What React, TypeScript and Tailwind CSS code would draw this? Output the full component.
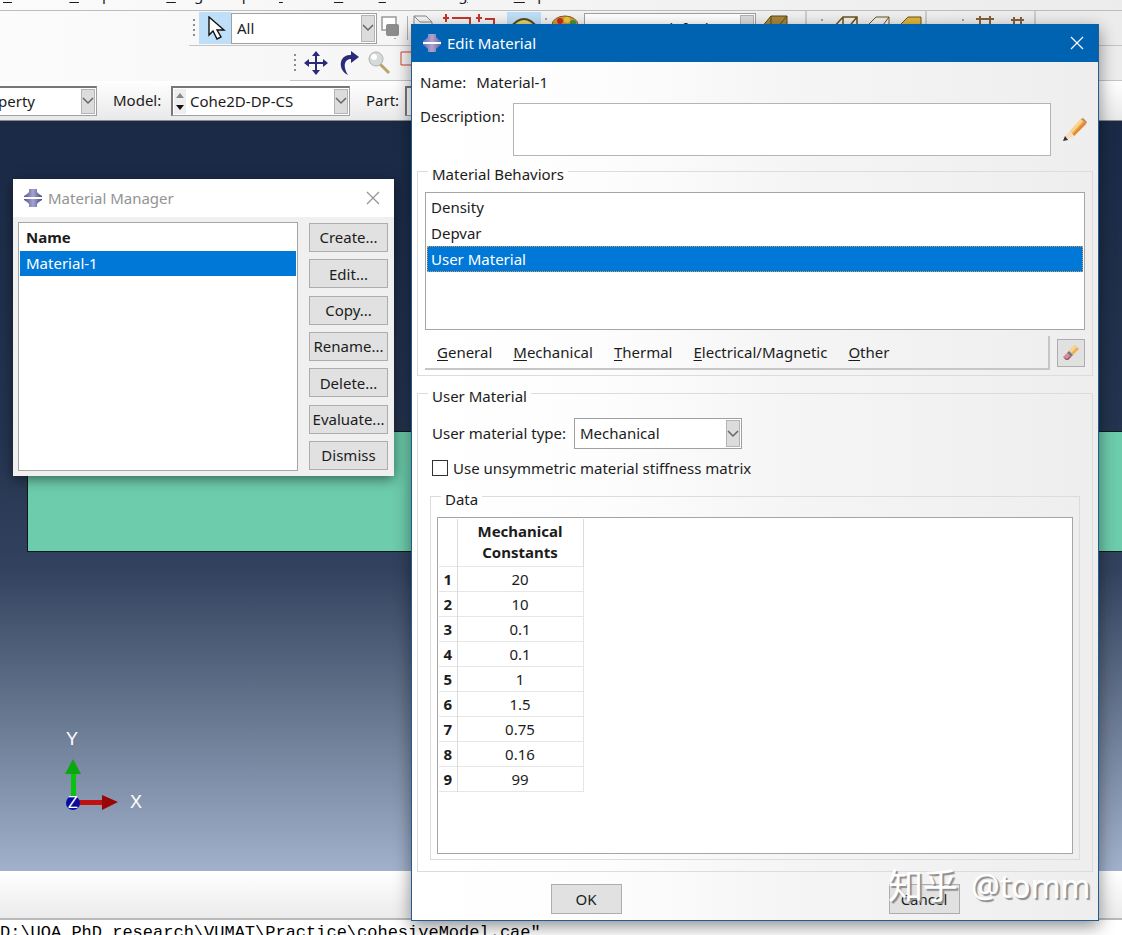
import React from "react";

interface MenuItem {
  before: string
  key: string
  after: string
}

interface ComboProps {
  id: string
  label: string
  value: string
  className?: string
  children?: React.ReactNode
}

const mainMenu: Array<MenuItem> = [
  { before: '', key: 'P', after: 'rofile' },
  { before: '', key: 'C', after: 'omposite' },
  { before: '', key: 'A', after: 'ssign' },
  { before: 'Specia', key: 'l', after: '' },
  { before: 'Feat', key: 'u', after: 're' },
  { before: '', key: 'T', after: 'ools' },
  { before: 'Plu', key: 'g', after: '-ins' },
  { before: '', key: 'H', after: 'elp' },
]

const behaviorMenu: Array<MenuItem> = [
  { before: '', key: 'G', after: 'eneral' },
  { before: '', key: 'M', after: 'echanical' },
  { before: '', key: 'T', after: 'hermal' },
  { before: '', key: 'E', after: 'lectrical/Magnetic' },
  { before: '', key: 'O', after: 'ther' },
]

const behaviors = ['Density', 'Depvar', 'User Material']
const constants = ['20', '10', '0.1', '0.1', '1', '1.5', '0.75', '0.16', '99']
const managerActions = ['Create...', 'Edit...', 'Copy...', 'Rename...', 'Delete...', 'Evaluate...', 'Dismiss']

const MenuLabel = ({ item }: { item: MenuItem }) => (
  <>{item.before}<span className="underline underline-offset-2">{item.key}</span>{item.after}</>
)

const Grip = () => (
  <svg width="4" height="20" viewBox="0 0 4 20" fill="#8d8d8d" aria-hidden="true">
    <rect x="1" y="1" width="2" height="2" />
    <rect x="1" y="6" width="2" height="2" />
    <rect x="1" y="11" width="2" height="2" />
    <rect x="1" y="16" width="2" height="2" />
  </svg>
)

const AppIcon = ({ active }: { active?: boolean }) => (
  <svg width="18" height="18" viewBox="0 0 18 18" aria-hidden="true">
    <defs>
      <linearGradient id={active ? 'ball-on' : 'ball-off'} x1="0" x2="1" y1="0" y2="0">
        <stop offset="0" stopColor={active ? '#5d6fc0' : '#55558c'} />
        <stop offset="0.5" stopColor={active ? '#b3a3c9' : '#a3a3d4'} />
        <stop offset="1" stopColor={active ? '#5d62b0' : '#4b4b80'} />
      </linearGradient>
    </defs>
    <path
      d="M5 0h8v3l2 2 3 2v4l-3 2-2 2v3H5v-3l-2-2-3-2V7l3-2 2-2z"
      fill={active ? 'url(#ball-on)' : 'url(#ball-off)'}
    />
    <rect x="0" y="8" width="18" height="2" fill="#fff" />
  </svg>
)

const CloseIcon = () => (
  <svg width="14" height="14" viewBox="0 0 14 14" stroke="currentColor" strokeWidth="1.2" aria-hidden="true">
    <path d="M1 1l12 12M13 1L1 13" />
  </svg>
)

const PencilIcon = () => (
  <svg width="26" height="26" viewBox="0 0 26 26" aria-hidden="true">
    <path d="M8 14L19 2l5 5-12 12z" fill="#f2ab4b" />
    <path d="M8 14L19 2l2 2L10 16z" fill="#fbd48c" />
    <path d="M11 17L22 5l2 2-12 12z" fill="#e08a35" />
    <path d="M19 2l2-1 4 4-1 2z" fill="#c9865a" />
    <path d="M8 14l4 5-7 4-3-3z" fill="#f7dcc0" />
    <path d="M3 19l3 4-5 1z" fill="#33302e" />
  </svg>
)

const EraserIcon = () => (
  <svg width="16" height="16" viewBox="0 0 16 16" aria-hidden="true">
    <path d="M12 0l4 4-6 6-4-4z" fill="#f0b255" />
    <path d="M12 0l2 2-6 6-2-2z" fill="#f8d48c" />
    <path d="M6 6l4 4-2 2-4-4z" fill="#75797c" />
    <path d="M4 8l4 4-3 3H3l-3-3z" fill="#d68aa0" />
    <path d="M0 12l3 3h2l3-3-1-1-3 3z" fill="#9c5468" />
  </svg>
)

const PointerIcon = () => (
  <svg width="18" height="24" viewBox="0 0 18 24" aria-hidden="true">
    <path d="M1 1v18l4-4 4 8 4-2-4-7h7z" fill="#fff" stroke="#111" strokeWidth="1.4" />
  </svg>
)

const OverlapIcon = () => (
  <svg width="19" height="24" viewBox="0 0 19 24" aria-hidden="true">
    <path d="M1 1h14v13H1z" fill="#fff" stroke="#999" strokeWidth="1.5" />
    <rect x="5" y="8" width="13" height="12" rx="2" fill="#8c8c8c" />
    <rect x="13" y="22" width="2" height="1" fill="#aaa" />
  </svg>
)

const MoveIcon = () => (
  <svg width="24" height="24" viewBox="0 0 24 24" fill="#2b2a78" aria-hidden="true">
    <path d="M11 4h2v16h-2zM4 11h16v2H4z" />
    <path d="M12 0l4 5H8zM12 24l4-5H8zM0 12l5-4v8zM24 12l-5-4v8z" />
  </svg>
)

const RotateIcon = () => (
  <svg width="20" height="24" viewBox="0 0 20 24" aria-hidden="true">
    <path d="M8 24C-3 19-1 3 11 4V0l8 6-8 6V8C5 8 2 15 8 24z" fill="#2b2a78" />
  </svg>
)

const MagnifierIcon = () => (
  <svg width="24" height="24" viewBox="0 0 24 24" aria-hidden="true">
    <path d="M12 13l9 9" stroke="#b9a468" strokeWidth="3" />
    <circle cx="8" cy="8" r="7" fill="#d6dbd9" stroke="#aeb2b1" />
    <circle cx="6" cy="6" r="3" fill="#fff" />
  </svg>
)

// the upper edges of the view tools that stick out above the dialog
const ViewTools = () => (
  <svg width="183" height="34" viewBox="0 0 183 34" fill="none" aria-hidden="true">
    <path d="M6 22V5h12l6 6v11M6 5l6 6h12" stroke="#888" />
    <path d="M38 3v8M35 7h6M44 7h18v14M71 3v8M68 7h6M77 8h9v12" stroke="#c8352a" strokeWidth="2" />
    <rect x="99" y="1" width="34" height="33" fill="#bfdff8" />
    <path d="M103 16q13-16 26 0" fill="#e8d474" stroke="#554a16" strokeWidth="2" />
    <circle cx="138" cy="8" r="1" fill="#888" />
    <ellipse cx="157" cy="14" rx="13" ry="9" fill="#d79a3c" stroke="#8a5a1c" />
    <circle cx="152" cy="10" r="3" fill="#cf2a1e" />
    <circle cx="159" cy="9" r="3" fill="#e9cf3a" />
    <circle cx="165" cy="12" r="3" fill="#3d9440" />
  </svg>
)

const RenderTools = () => (
  <svg width="280" height="34" viewBox="0 0 280 34" fill="none" aria-hidden="true">
    <path d="M5 17L15 5h16v12z" fill="#a8883c" stroke="#5c4813" />
    <path d="M15 5v12M31 5L21 17" stroke="#5c4813" />
    <path d="M50 0v34M170 0v34M279 0v34" stroke="#aaa" />
    <circle cx="66" cy="9" r="1" fill="#888" />
    <path d="M77 17L87 6h14v16M87 6v14M101 6L91 18" stroke="#6b5416" strokeWidth="1.5" />
    <path d="M109 17l11-11h13v16M133 6l-9 12" stroke="#6b5416" />
    <path d="M141 17l11-11h13v12z" fill="#e3b63c" stroke="#6b5416" />
    <circle cx="207" cy="9" r="1" fill="#888" />
    <path d="M220 8h18M224 5v14M234 5v14M255 9h13M258 6v14M265 6v14" stroke="#86603a" strokeWidth="2" />
  </svg>
)

const Chevron = () => (
  <svg width="12" height="8" viewBox="0 0 12 8" fill="none" stroke="#666" strokeWidth="1.5" aria-hidden="true">
    <path d="M1 1l5 5 5-5" />
  </svg>
)

const Combo = ({ id, label, value, className, children }: ComboProps) => (
  <div className={`flex items-stretch border border-[#a0a0a0] bg-white p-px ${className}`}>
    {children}
    <select id={id} aria-label={label} className="min-w-0 flex-1 appearance-none bg-white pl-1 outline-none">
      <option>{value}</option>
    </select>
    <span className="pointer-events-none flex w-[14px] items-center justify-center border border-[#b4b4b4] bg-[#dcdcdc]">
      <Chevron />
    </span>
  </div>
)

const Toolbars = () => (
  <header className="flex flex-col bg-linear-to-r from-[#fbfbfb] to-[#ececec]">
    <nav className="flex h-[10px] items-end gap-[21px] overflow-hidden whitespace-nowrap pb-[6px] pl-[3px]">
      {mainMenu.map((item) => (
        <a key={item.key} href="#" className="leading-5"><MenuLabel item={item} /></a>
      ))}
    </nav>
    <div className="flex h-[36px] border-t border-[#bdbdbd] pl-[189px]">
      <div className="flex flex-1 items-center whitespace-nowrap border-b border-[#c4c4c4]">
        <div className="flex w-[10px] justify-center"><Grip /></div>
        <button type="button" aria-label="Select" className="flex h-[32px] w-[32px] items-center justify-center bg-[#bfdff8] pl-1">
          <PointerIcon />
        </button>
        <Combo id="filter" label="Selection filter" value="All" className="h-[31px] w-[146px]" />
        <button type="button" aria-label="Overlap" className="flex w-[31px] justify-center border-r border-[#b0b0b0] pr-1"><OverlapIcon /></button>
        <ViewTools />
        <Combo id="color" label="Color code" value="Geometry defaults" className="ml-[-7px] h-[31px] w-[172px]" />
        <RenderTools />
      </div>
    </div>
    <div className="flex h-[35px] pl-[290px]">
      <div className="flex flex-1 items-center border-b border-[#c4c4c4]">
        <div className="flex w-[9px] justify-center"><Grip /></div>
        <div className="flex items-center gap-2 pl-[5px]">
          <button type="button" aria-label="Pan"><MoveIcon /></button>
          <button type="button" aria-label="Rotate" className="pl-1"><RotateIcon /></button>
          <button type="button" aria-label="Magnify"><MagnifierIcon /></button>
          <svg width="20" height="24" viewBox="0 0 20 24" fill="none" stroke="#d0402e" aria-hidden="true">
            <path d="M1 1h17v13H1z" />
          </svg>
        </div>
      </div>
    </div>
    <div className="flex h-[40px] items-center border-b border-[#8b8b8b] bg-linear-to-b from-white to-[#e9e9e9]">
      <Combo id="module" label="Module" value="Property" className="-ml-[32px] h-[30px] w-[129px] shrink-0 border-t-2 border-t-[#777]" />
      <label htmlFor="model" className="w-[74px] pl-4">Model:</label>
      <Combo id="model" label="Model" value="Cohe2D-DP-CS" className="h-[30px] w-[179px] shrink-0 border-t-2 border-l-2 border-t-[#777] border-l-[#777]">
        <span className="flex w-[12px] flex-col items-center justify-between bg-[#eee] py-1">
          <svg width="8" height="5" viewBox="0 0 8 5" aria-hidden="true"><path d="M4 0l4 5H0z" fill="#888" /></svg>
          <svg width="8" height="5" viewBox="0 0 8 5" aria-hidden="true"><path d="M0 0h8L4 5z" fill="#111" /></svg>
        </span>
      </Combo>
      <label htmlFor="part" className="w-[55px] pl-4">Part:</label>
      <Combo id="part" label="Part" value="" className="h-[30px] w-[180px] border-t-2 border-l-2 border-t-[#777] border-l-[#777]" />
    </div>
  </header>
)

const Viewport = () => (
  <main className="relative flex-1 bg-[linear-gradient(to_bottom,#1a2a46_0%,#24344f_42%,#33425e_60%,#62718a_77%,#a2b1cb_100%)]">
    <div className="absolute top-[310px] right-0 left-[27px] h-[121px] border border-r-0 border-[#0b1a1c] bg-[#6cccab]" />
    <svg className="absolute bottom-[55px] left-[60px]" width="90" height="90" viewBox="0 0 90 90" aria-hidden="true">
      <rect x="11" y="40" width="5" height="36" fill="#06c40c" />
      <path d="M13 33l8 15H5z" fill="#08a80e" />
      <rect x="16" y="74" width="27" height="5" fill="#c01010" />
      <path d="M42 69l16 7-16 8z" fill="#980606" />
      <circle cx="13" cy="77" r="7" fill="#0a0aa0" />
      <g fill="#fff" fontFamily="Liberation Sans" fontSize="18">
        <text x="6" y="19">Y</text>
        <text x="70" y="82">X</text>
        <text x="8" y="82" fontSize="16">Z</text>
      </g>
    </svg>
  </main>
)

const MaterialManager = () => (
  <section className="absolute top-[179px] left-[13px] w-[381px] bg-[#f0f0f0] shadow-[0_3px_12px_rgba(0,0,0,0.5)]">
    <div className="flex h-[38px] items-center bg-white pr-3.5 pl-[11px] text-[#939393]">
      <AppIcon />
      <h2 className="flex-1 pl-[6px]">Material Manager</h2>
      <button type="button" aria-label="Close"><CloseIcon /></button>
    </div>
    <div className="flex gap-[11px] py-[5px] pr-[6px] pl-[5px]">
      <div className="h-[249px] flex-1 border border-[#a5a5a5] bg-white p-px">
        <div className="flex h-[27px] items-center pl-[6px] font-bold">Name</div>
        <div className="flex h-[25px] items-center bg-[#0078d7] pl-[6px] text-white">Material-1</div>
      </div>
      <div className="flex w-[79px] flex-col justify-between py-px">
        {managerActions.map((action) => (
          <button key={action} type="button" className="h-[29px] whitespace-nowrap border border-[#adadad] bg-[#e1e1e1]">{action}</button>
        ))}
      </div>
    </div>
  </section>
)

const BehaviorFields = () => {
  const [selected, setSelected] = React.useState('User Material')

  return (
    <fieldset className="min-w-0 border border-[#dcdcdc] px-[7px] pt-2 pb-[5px]">
      <legend className="ml-[3px] px-1 pt-[6px] leading-5">Material Behaviors</legend>
      <ul className="h-[138px] border border-[#a5a5a5] bg-white p-px">
        {behaviors.map((name) => (
          <li key={name}>
            <button
              type="button"
              onClick={() => setSelected(name)}
              className={`h-[26px] w-full border pl-[3px] text-left ${selected === name ? 'border-dotted border-[#d09a5c] bg-[#0078d7] text-white' : 'border-transparent'}`}
            >
              {name}
            </button>
          </li>
        ))}
      </ul>
      <div className="mt-[6px] flex items-center gap-[7px]">
        <div className="flex h-[34px] flex-1 items-center gap-[21px] whitespace-nowrap border-r-2 border-b-2 border-[#c6c6c6] pl-3">
          {behaviorMenu.map((item) => (
            <button key={item.key} type="button"><MenuLabel item={item} /></button>
          ))}
        </div>
        <button type="button" aria-label="Delete behavior" className="flex h-[28px] w-[28px] items-center justify-center border border-[#adadad] bg-[#e1e1e1]">
          <EraserIcon />
        </button>
      </div>
    </fieldset>
  )
}

const UserMaterialFields = () => (
  <fieldset className="mt-1 min-w-0 border border-[#dcdcdc] pt-3 pr-3 pb-[11px] pl-3">
    <legend className="-ml-[2px] px-1 pt-[6px] leading-5">User Material</legend>
    <div className="flex items-center pl-[2px]">
      <label htmlFor="material-type" className="w-[142px] whitespace-nowrap">User material type:</label>
      <Combo id="material-type" label="User material type" value="Mechanical" className="h-[31px] w-[168px]" />
    </div>
    <label className="mt-[9px] flex h-5 items-center gap-[5px] pl-[2px]">
      <input type="checkbox" className="h-4 w-4 appearance-none border border-[#333] bg-white" />
      Use unsymmetric material stiffness matrix
    </label>
    <fieldset className="mt-[5px] min-w-0 border border-[#dcdcdc] px-[6px] pt-2 pb-[5px]">
      <legend className="ml-1 px-1 pt-[6px] leading-5">Data</legend>
      <div className="h-[337px] border border-[#a5a5a5] bg-white p-px">
        <table className="table-fixed border-collapse text-center">
          <thead>
            <tr className="h-[47px] border-b border-[#e6e6e6]">
              <th className="w-[18px] border-r border-[#dcdcdc]"></th>
              <th className="w-[126px] border-r border-[#dcdcdc] leading-[21px]">Mechanical<br />Constants</th>
            </tr>
          </thead>
          <tbody>
            {constants.map((value, index) => (
              <tr key={index} className="h-[25px] border-b border-[#e6e6e6] leading-5">
                <th className="border-r border-[#dcdcdc]">{index + 1}</th>
                <td className="border-r border-[#e6e6e6]">{value}</td>
              </tr>
            ))}
          </tbody>
        </table>
      </div>
    </fieldset>
  </fieldset>
)

const EditMaterial = () => (
  <section className="absolute top-[24px] left-[411px] w-[688px] border-x border-b border-[#1f5d92] bg-[linear-gradient(to_right,#ffffff_0%,#fdfdfd_28%,#f5f5f5_55%,#eeeeee_100%)] shadow-[0_5px_16px_rgba(0,0,0,0.45)]">
    <div className="flex h-[38px] items-center bg-[#0063b1] pr-3.5 pl-[11px] text-white">
      <AppIcon active />
      <h2 className="flex-1 pl-[6px]">Edit Material</h2>
      <button type="button" aria-label="Close"><CloseIcon /></button>
    </div>
    <form className="px-[5px] pt-[10px] pb-[6px]" onSubmit={(event) => event.preventDefault()}>
      <div className="flex gap-[10px] pl-[3px] leading-5">
        <span>Name:</span>
        <span>Material-1</span>
      </div>
      <div className="mt-[11px] mb-[2px] flex pl-[3px]">
        <label htmlFor="description" className="w-[93px] pt-[3px] leading-5">Description:</label>
        <textarea id="description" className="h-[53px] flex-1 resize-none border border-[#b4b4b4] bg-white px-1 outline-none" />
        <button type="button" aria-label="Edit description" className="flex w-[42px] items-center justify-center pl-[6px]">
          <PencilIcon />
        </button>
      </div>
      <BehaviorFields />
      <UserMaterialFields />
      <div className="mt-3 grid grid-cols-2 justify-items-center">
        <button type="submit" className="h-[30px] w-[71px] border border-[#adadad] bg-[#e1e1e1]">OK</button>
        <button type="button" className="h-[30px] w-[71px] border border-[#adadad] bg-[#e1e1e1]">Cancel</button>
      </div>
    </form>
  </section>
)

const App = () => {
  return (
    <div className="relative flex min-h-screen w-full flex-col overflow-hidden bg-white font-['Noto_Sans','Noto_Sans_CJK_SC',sans-serif] text-[15px] text-[#1c1c1c]">
      <Toolbars />
      <Viewport />
      <div className="h-[49px] border-b-2 border-[#b9b9b9] bg-linear-to-b from-white to-[#ebebeb]" />
      <footer className="h-[15px] overflow-hidden whitespace-nowrap font-['Liberation_Mono',monospace] text-[17px] leading-[26px] text-black">
        D:\UOA_PhD_research\VUMAT\Practice\cohesiveModel.cae"
      </footer>
      <MaterialManager />
      <EditMaterial />
      <p className="pointer-events-none absolute top-[864px] left-[888px] flex items-center gap-[13px] whitespace-nowrap text-[32px] leading-[44px] text-white [text-shadow:2px_2px_1px_#8d8d8d]">
        <span className="text-[35px]">知乎</span>
        <span>@tomm</span>
      </p>
    </div>
  );
};

export default App;
